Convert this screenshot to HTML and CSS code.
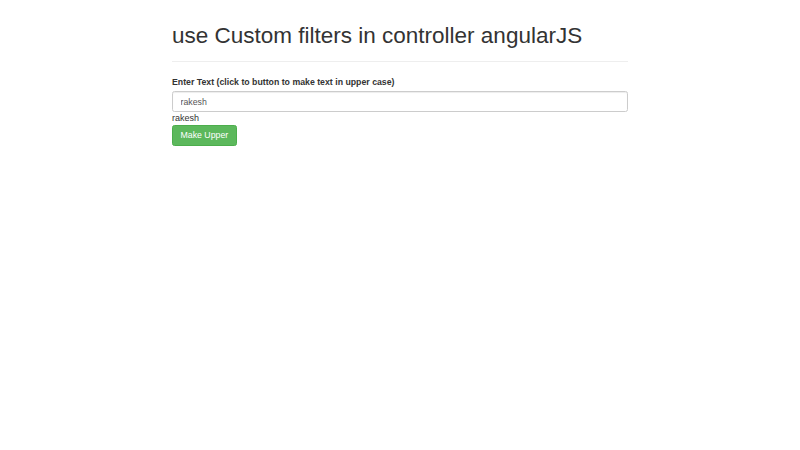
FILE: index.html
```html
<!DOCTYPE html>
<html lang="en">
<head>
  <meta charset="UTF-8" />
  <title>use Custom filters in controller angularJS</title>
  <link rel="stylesheet" href="styles.css">
</head>
<body>
  <div class="container">
    <h1>use Custom filters in controller angularJS</h1>
    <hr />

    <div class="form-group">
      <label for="text-input">Enter Text (click to button to make text in upper case)</label>
      <input type="text" id="text-input" class="form-control" value="rakesh" />
      <div class="output">rakesh</div>
      <button class="btn btn-success" onclick="makeUpper()">Make Upper</button>
    </div>
  </div>

  <script>
    function makeUpper() {
      const input = document.getElementById("text-input");
      input.value = input.value.toUpperCase();
      document.querySelector(".output").textContent = input.value;
    }

    document.getElementById("text-input").addEventListener("input", e => {
      document.querySelector(".output").textContent = e.target.value;
    });
  </script>
</body>
</html>
```

FILE: styles.css
```css
* {
  box-sizing: border-box;
}

body {
  margin: 0;
  font-family: "Liberation Sans", Arial, sans-serif;
  font-size: 8.75px;
  line-height: 1.42857;
  color: #333;
  background: #fff;
}

.container {
  width: 456px;
  margin: 0 auto;
  padding-top: 23.5px;
}

h1 {
  margin: 0;
  font-size: 22.5px;
  font-weight: normal;
  line-height: 1.1;
}

hr {
  margin: 12.5px 0;
  border: 0;
  border-top: 1px solid #eee;
}

label {
  display: block;
  padding-top: 1.5px;
  margin-bottom: 3px;
  font-weight: bold;
}

.form-control {
  display: block;
  width: 100%;
  height: 21px;
  padding: 3px 7.5px;
  font-family: inherit;
  font-size: 8.75px;
  color: #555;
  background: #fff;
  border: 1px solid #ccc;
  border-radius: 2.5px;
  box-shadow: inset 0 1px 1px rgba(0, 0, 0, 0.075);
}

.output {
  font-size: 9px;
  line-height: 12.5px;
}

.btn {
  height: 21px;
  padding: 0 7.5px;
  font-family: inherit;
  font-size: 8.75px;
  border: 1px solid transparent;
  border-radius: 2.5px;
  cursor: pointer;
}

.btn-success {
  color: #fff;
  background: #5cb85c;
  border-color: #4cae4c;
}

.btn-success:hover {
  background: #449d44;
}
```
